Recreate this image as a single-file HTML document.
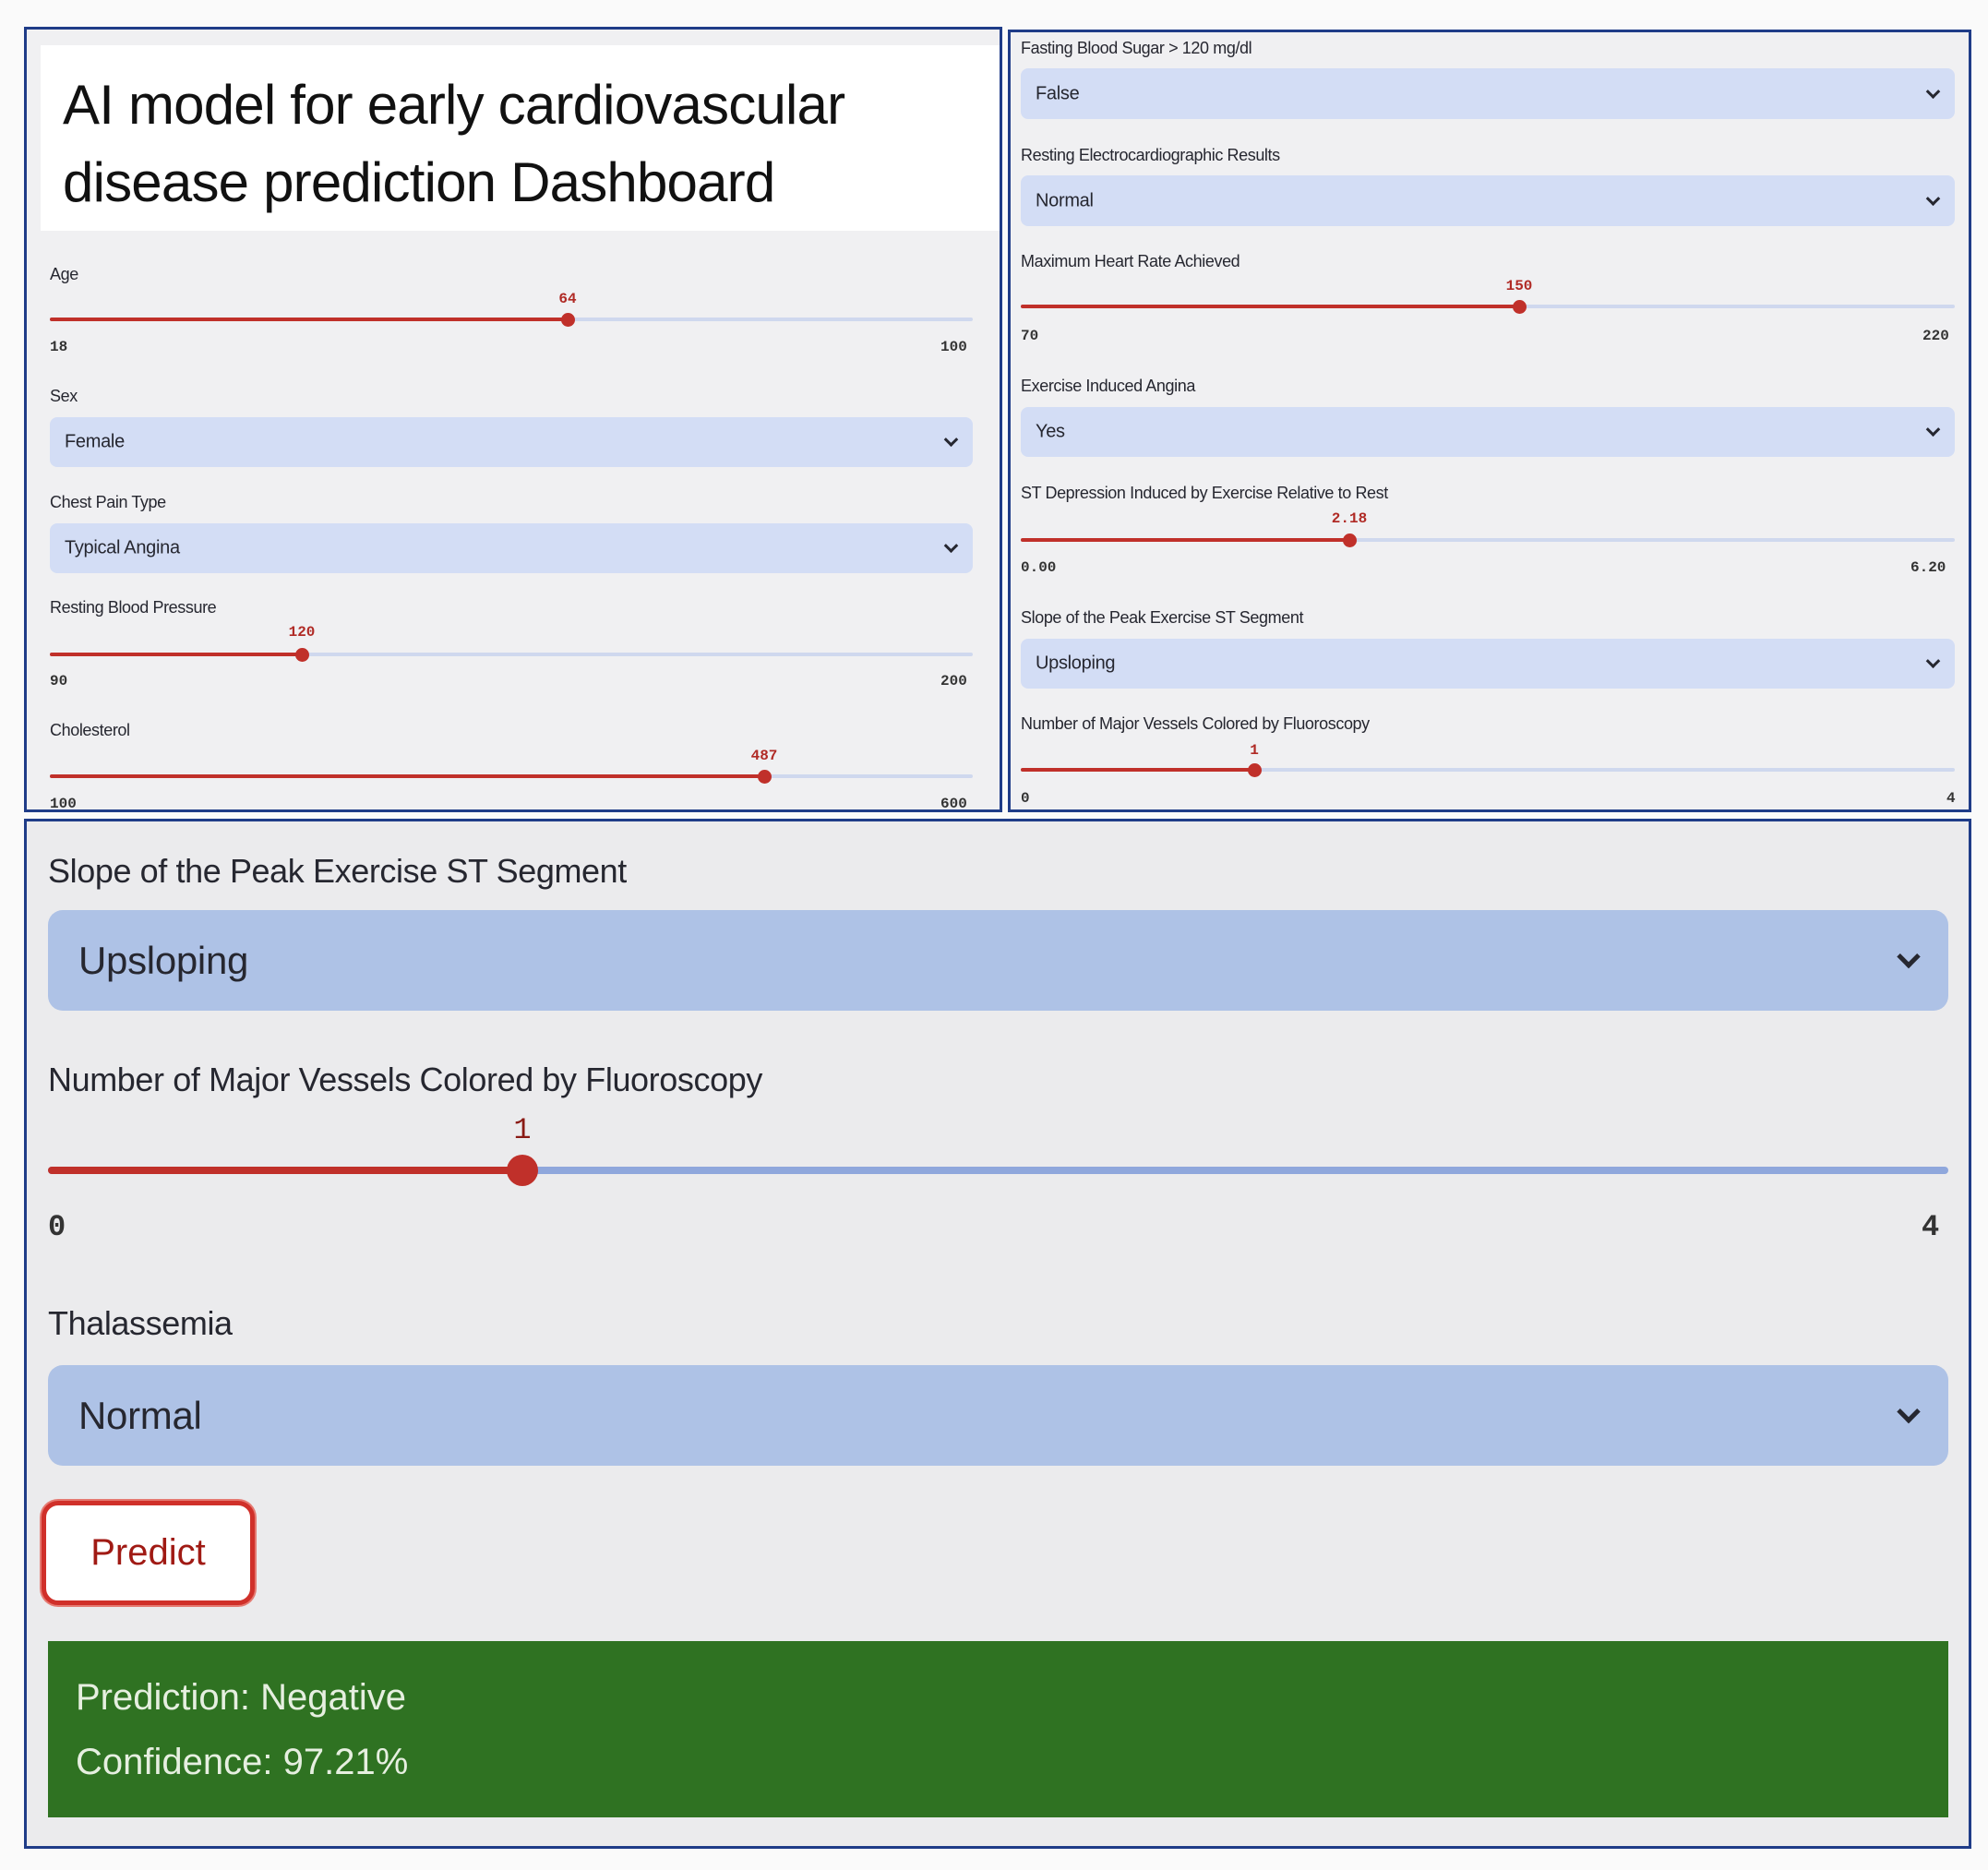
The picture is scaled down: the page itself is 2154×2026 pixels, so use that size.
<!DOCTYPE html>
<html><head><meta charset="utf-8"><style>
*{margin:0;padding:0;box-sizing:border-box}
body{width:2154px;height:2026px;background:#fafafa;position:relative;overflow:hidden;font-family:"Liberation Sans",sans-serif;color:#262730}
.a{position:absolute}
.panel{position:absolute;border:3px solid #1f3c88;background:#f0f0f2;overflow:hidden}
.lbl{position:absolute;font-size:18px;line-height:22px;height:22px;color:#262730;letter-spacing:-0.4px;white-space:nowrap}
.sel{position:absolute;background:#d3ddf5;border-radius:8px;font-size:20px;letter-spacing:-0.3px}
.sel span{position:absolute;left:16px;top:50%;transform:translateY(-50%)}
.chev{position:absolute;right:18px;top:50%;width:11px;height:11px;border-right:3px solid #262730;border-bottom:3px solid #262730;transform:translateY(-75%) rotate(45deg)}
.trk{position:absolute;height:4px;border-radius:2px;background:#cfd8ee}
.fill{position:absolute;left:0;top:0;height:4px;background:#c0302a;border-radius:2px}
.th{position:absolute;width:15px;height:15px;border-radius:50%;background:#c0302a}
.val{position:absolute;font-family:"Liberation Mono",monospace;font-size:16px;font-weight:bold;color:#b02a25;line-height:20px;transform:translateX(-50%)}
.mm{position:absolute;font-family:"Liberation Mono",monospace;font-size:16px;font-weight:bold;color:#333;line-height:20px}
</style></head><body>

<div class="panel" style="left:26px;top:29px;width:1060px;height:851px"></div>
<div class="a" style="left:44px;top:49px;width:1039px;height:201px;background:#fff"></div>
<div class="a" style="left:68px;top:72px;font-size:60px;line-height:84px;color:#111;letter-spacing:-0.8px">AI model for early cardiovascular<br>disease prediction Dashboard</div>

<div class="lbl" style="left:54px;top:286px">Age</div>
<div class="val" style="left:615px;top:314px">64</div>
<div class="trk" style="left:54px;top:344px;width:1000px"><div class="fill" style="width:561px"></div></div>
<div class="th" style="left:608px;top:339px"></div>
<div class="mm" style="left:54px;top:366px">18</div><div class="mm" style="left:1019px;top:366px">100</div>

<div class="lbl" style="left:54px;top:418px">Sex</div>
<div class="sel" style="left:54px;top:452px;width:1000px;height:54px"><span>Female</span><div class="chev"></div></div>

<div class="lbl" style="left:54px;top:533px">Chest Pain Type</div>
<div class="sel" style="left:54px;top:567px;width:1000px;height:54px"><span>Typical Angina</span><div class="chev"></div></div>

<div class="lbl" style="left:54px;top:647px">Resting Blood Pressure</div>
<div class="val" style="left:327px;top:675px">120</div>
<div class="trk" style="left:54px;top:707px;width:1000px"><div class="fill" style="width:273px"></div></div>
<div class="th" style="left:320px;top:702px"></div>
<div class="mm" style="left:54px;top:728px">90</div><div class="mm" style="left:1019px;top:728px">200</div>

<div class="lbl" style="left:54px;top:780px">Cholesterol</div>
<div class="val" style="left:828px;top:809px">487</div>
<div class="trk" style="left:54px;top:839px;width:1000px"><div class="fill" style="width:774px"></div></div>
<div class="th" style="left:821px;top:834px"></div>
<div class="a" style="left:26px;top:861px;width:1060px;height:16px;overflow:hidden"><div class="mm" style="left:28px;top:0">100</div><div class="mm" style="left:993px;top:0">600</div></div>

<div class="panel" style="left:1092px;top:32px;width:1044px;height:848px"></div>

<div class="lbl" style="left:1106px;top:41px">Fasting Blood Sugar &gt; 120 mg/dl</div>
<div class="sel" style="left:1106px;top:74px;width:1012px;height:55px"><span>False</span><div class="chev"></div></div>

<div class="lbl" style="left:1106px;top:157px">Resting Electrocardiographic Results</div>
<div class="sel" style="left:1106px;top:190px;width:1012px;height:55px"><span>Normal</span><div class="chev"></div></div>

<div class="lbl" style="left:1106px;top:272px">Maximum Heart Rate Achieved</div>
<div class="val" style="left:1646px;top:300px">150</div>
<div class="trk" style="left:1106px;top:330px;width:1012px"><div class="fill" style="width:540px"></div></div>
<div class="th" style="left:1639px;top:325px"></div>
<div class="mm" style="left:1106px;top:354px">70</div><div class="mm" style="left:2083px;top:354px">220</div>

<div class="lbl" style="left:1106px;top:407px">Exercise Induced Angina</div>
<div class="sel" style="left:1106px;top:441px;width:1012px;height:54px"><span>Yes</span><div class="chev"></div></div>

<div class="lbl" style="left:1106px;top:523px">ST Depression Induced by Exercise Relative to Rest</div>
<div class="val" style="left:1462px;top:552px">2.18</div>
<div class="trk" style="left:1106px;top:583px;width:1012px"><div class="fill" style="width:356px"></div></div>
<div class="th" style="left:1455px;top:578px"></div>
<div class="mm" style="left:1106px;top:605px">0.00</div><div class="mm" style="left:2070px;top:605px">6.20</div>

<div class="lbl" style="left:1106px;top:658px">Slope of the Peak Exercise ST Segment</div>
<div class="sel" style="left:1106px;top:692px;width:1012px;height:54px"><span>Upsloping</span><div class="chev"></div></div>

<div class="lbl" style="left:1106px;top:773px">Number of Major Vessels Colored by Fluoroscopy</div>
<div class="val" style="left:1359px;top:803px">1</div>
<div class="trk" style="left:1106px;top:832px;width:1012px"><div class="fill" style="width:253px"></div></div>
<div class="th" style="left:1352px;top:827px"></div>
<div class="a" style="left:1092px;top:855px;width:1044px;height:22px;overflow:hidden"><div class="mm" style="left:14px;top:0">0</div><div class="mm" style="left:1017px;top:0">4</div></div>

<div class="panel" style="left:26px;top:887px;width:2110px;height:1116px;background:#ebebed"></div>

<div class="lbl" style="left:52px;top:922px;font-size:36px;line-height:44px;height:44px">Slope of the Peak Exercise ST Segment</div>
<div class="sel" style="left:52px;top:986px;width:2059px;height:109px;background:#aec2e6;border-radius:16px;font-size:42px"><span style="left:33px">Upsloping</span><div class="chev" style="right:34px;width:18px;height:18px;border-width:0 5px 5px 0"></div></div>

<div class="lbl" style="left:52px;top:1148px;font-size:36px;line-height:44px;height:44px">Number of Major Vessels Colored by Fluoroscopy</div>
<div class="val" style="left:566px;top:1208px;font-size:32px;line-height:34px;font-weight:normal;color:#8a1a14">1</div>
<div class="trk" style="left:52px;top:1264px;width:2059px;height:8px;border-radius:4px;background:#8fa7dc"><div class="fill" style="width:514px;height:8px;border-radius:4px"></div></div>
<div class="th" style="left:549px;top:1251px;width:34px;height:34px"></div>
<div class="mm" style="left:52px;top:1313px;font-size:32px;line-height:34px">0</div>
<div class="mm" style="left:2082px;top:1313px;font-size:32px;line-height:34px">4</div>

<div class="lbl" style="left:52px;top:1412px;font-size:36px;line-height:44px;height:44px">Thalassemia</div>
<div class="sel" style="left:52px;top:1479px;width:2059px;height:109px;background:#aec2e6;border-radius:16px;font-size:42px"><span style="left:33px">Normal</span><div class="chev" style="right:34px;width:18px;height:18px;border-width:0 5px 5px 0"></div></div>

<div class="a" style="left:45px;top:1626px;width:231px;height:113px;border:5px solid #d0302a;border-radius:18px;background:#fff;box-shadow:0 0 0 2px #e57a72"></div>
<div class="a" style="left:45px;top:1626px;width:231px;height:113px;text-align:center;line-height:113px;font-size:40px;color:#a01a14">Predict</div>

<div class="a" style="left:52px;top:1778px;width:2059px;height:191px;background:#2f7222"></div>
<div class="a" style="left:82px;top:1804px;font-size:40px;line-height:70px;color:#e6efe0">Prediction: Negative<br>Confidence: 97.21%</div>

</body></html>
